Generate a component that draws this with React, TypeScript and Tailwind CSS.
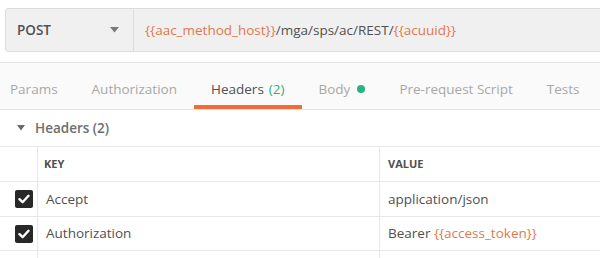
import React from "react";

const Var = ({ children }: { children: React.ReactNode }) => (
  <span className="text-[#e0784f]">{children}</span>
);

const Check = () => (
  <div className="w-[18px] h-[18px] rounded-[2px] bg-[#282828] flex items-center justify-center">
    <svg width="12" height="10" viewBox="0 0 12 10">
      <path d="M1.5 5.2 L4.6 8.2 L10.5 1.8" fill="none" stroke="#fff" strokeWidth="2.4" strokeLinecap="round" strokeLinejoin="round" />
    </svg>
  </div>
);

export default function App() {
  const tabs = [
    { label: "Params" },
    { label: "Authorization" },
    { label: "Headers", active: true, count: "(2)" },
    { label: "Body", dot: true },
    { label: "Pre-request Script" },
    { label: "Tests" },
  ];
  return (
    <div
      className="w-[600px] h-[258px] bg-white overflow-hidden text-[#505050]"
      style={{ fontFamily: '"Open Sans", "Noto Sans", sans-serif' }}
    >
      <div className="pt-[8px] pl-[5px]">
        <div className="h-[44px] w-[600px] flex bg-[#f0f0f0] border border-[#dcdcdc] rounded-[3px]">
          <div className="w-[128px] flex items-center justify-between pl-[11px] pr-[14px] border-r border-[#dcdcdc]">
            <span className="text-[13.5px] font-semibold text-[#505050]">POST</span>
            <svg width="9" height="6" viewBox="0 0 9 6">
              <path d="M0 0 H9 L4.5 5.5 Z" fill="#7a7a7a" />
            </svg>
          </div>
          <div className="flex items-center pl-[11px] text-[13.5px] text-[#505050]">
            <Var>{"{{aac_method_host}}"}</Var>
            <span>/mga/sps/ac/REST/</span>
            <Var>{"{{acuuid}}"}</Var>
          </div>
        </div>
      </div>

      <div className="mt-[10px] border-t border-[#e6e6e6] bg-[#fafafa] h-[48px] border-b border-b-[#e3e3e3] flex ml-[-7px]">
        {tabs.map((t) => (
          <div key={t.label} className="relative px-[17px] flex items-center pt-[6px] text-[13.5px] whitespace-nowrap">
            <span className={t.active ? "text-[#505050]" : "text-[#a8a8a8]"}>{t.label}</span>
            {t.count && <span className="ml-[5px] text-[#26b47f]">{t.count}</span>}
            {t.dot && <span className="ml-[7px] w-[8px] h-[8px] rounded-full bg-[#26b47f]" />}
            {t.active && <div className="absolute left-0 right-0 bottom-0 h-[4px] bg-[#f26b3a]" />}
          </div>
        ))}
      </div>

      <div className="h-[36px] flex items-center pl-[17px]">
        <svg width="8" height="6" viewBox="0 0 8 6">
          <path d="M0 0 H8 L4 5.5 Z" fill="#6a6a6a" />
        </svg>
        <span className="ml-[10px] text-[13.5px] font-semibold text-[#6e6e6e]">Headers (2)</span>
      </div>

      <div className="border-t border-[#e8e8e8]">
        <div className="flex h-[35px] border-b border-[#e8e8e8]">
          <div className="w-[38px] border-r border-[#e8e8e8]" />
          <div className="w-[342px] border-r border-[#e8e8e8] flex items-center pl-[6px] text-[11px] font-bold text-[#505050]">KEY</div>
          <div className="flex-1 flex items-center pl-[8px] text-[11px] font-bold text-[#505050]">VALUE</div>
        </div>
        <div className="flex h-[35px] border-b border-[#e8e8e8]">
          <div className="w-[38px] border-r border-[#e8e8e8] flex items-center pl-[15px]"><Check /></div>
          <div className="w-[342px] border-r border-[#e8e8e8] flex items-center pl-[8px] text-[13.5px]">Accept</div>
          <div className="flex-1 flex items-center pl-[8px] text-[13.5px]">application/json</div>
        </div>
        <div className="flex h-[34px] border-b border-[#e8e8e8]">
          <div className="w-[38px] border-r border-[#e8e8e8] flex items-center pl-[15px]"><Check /></div>
          <div className="w-[342px] border-r border-[#e8e8e8] flex items-center pl-[8px] text-[13.5px]">Authorization</div>
          <div className="flex-1 flex items-center pl-[8px] text-[13.5px]">
            Bearer&nbsp;<Var>{"{{access_token}}"}</Var>
          </div>
        </div>
        <div className="flex h-[20px]">
          <div className="w-[38px] border-r border-[#e8e8e8]" />
          <div className="w-[342px] border-r border-[#e8e8e8]" />
          <div className="flex-1" />
        </div>
      </div>
    </div>
  );
}
